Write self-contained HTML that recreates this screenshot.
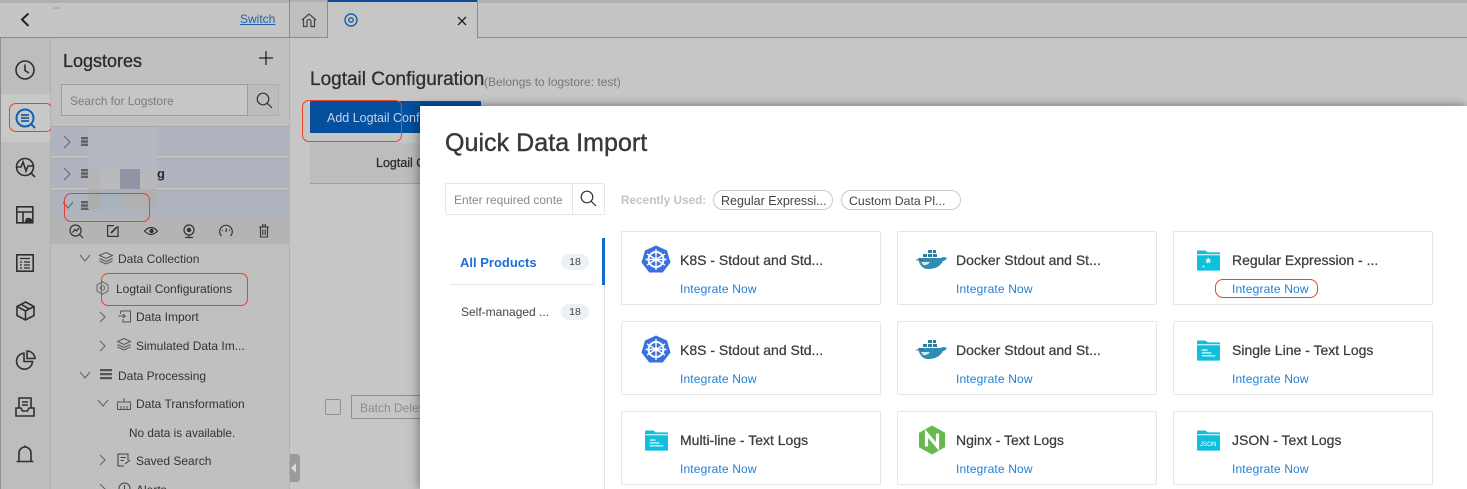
<!DOCTYPE html>
<html><head><meta charset="utf-8">
<style>
html,body{margin:0;padding:0;width:1467px;height:489px;overflow:hidden;background:#c6c6c6;font-family:"Liberation Sans",sans-serif;color:#333}
body{position:relative}
.a{position:absolute}
.t{position:absolute;white-space:nowrap;line-height:16px}
svg{position:absolute;overflow:visible}
.s{fill:none;stroke:#2f2f2f;stroke-width:1.6}
.tree{font-size:12px;color:#333}
.red{position:absolute;border:1px solid #e8412c;border-radius:7px;box-sizing:border-box}
.card{position:absolute;width:260px;height:74px;background:#fff;border:1px solid #e6e6e6;border-radius:2px;box-sizing:border-box}
.ct{position:absolute;left:58px;top:20px;font-size:14px;line-height:17px;color:#3c3c3c;white-space:nowrap;-webkit-text-stroke:.25px #3c3c3c}
.cl{position:absolute;left:58px;top:49px;font-size:12px;line-height:16px;color:#1f7fd8;white-space:nowrap;letter-spacing:.15px}
.ic{left:19px;top:13px}
.pill{position:absolute;height:20px;border:1px solid #c9c9c9;border-radius:10px;box-sizing:border-box;font-size:12.5px;line-height:21px;padding-left:7px;color:#444;white-space:nowrap}
.badge{position:absolute;width:28px;height:16px;border-radius:8px;background:#edf1f5;font-size:10.5px;line-height:16px;text-align:center;color:#444}
</style></head><body>

<!-- top bar -->
<div class="a" style="left:0;top:0;width:1467px;height:37px;background:#c5c5c5;border-bottom:1px solid #8b8b8b"></div>
<div class="a" style="left:0;top:0;width:1467px;height:3px;background:#b0b0b0"></div>
<div class="a" style="left:53px;top:7px;width:7px;height:2px;background:#c9ac95"></div>
<svg style="left:19px;top:12px" width="12" height="16"><path d="M9.5 1.5 L3 7.5 L9.5 14" fill="none" stroke="#222" stroke-width="2"/></svg>
<div class="t" style="left:240px;top:11px;font-size:12px;color:#1c62a8;text-decoration:underline">Switch</div>
<div class="a" style="left:289px;top:0;width:1px;height:37px;background:#8b8b8b"></div>
<div class="a" style="left:290px;top:2px;width:37px;height:35px;background:#bfbfbf"></div>
<svg style="left:301px;top:13px" width="16" height="14"><path d="M1 7 L8 1 L15 7 M2.5 6 V13.5 H6 V8.5 A2 2 0 0 1 10 8.5 V13.5 H13.5 V6" fill="none" stroke="#444" stroke-width="1.2"/></svg>
<div class="a" style="left:327px;top:0;width:151px;height:38px;background:#c6c6c6;border-left:1px solid #8b8b8b;border-right:1px solid #8b8b8b;box-sizing:border-box"></div>
<div class="a" style="left:328px;top:0;width:149px;height:2px;background:#0a4c9a"></div>
<svg style="left:344px;top:13px" width="14" height="14"><circle cx="7" cy="7" r="6" fill="none" stroke="#1a5ea8" stroke-width="1.4"/><circle cx="7" cy="7" r="2.2" fill="none" stroke="#1a5ea8" stroke-width="1.4"/></svg>
<svg style="left:457px;top:16px" width="10" height="10"><path d="M1 1 L9 9 M9 1 L1 9" stroke="#222" stroke-width="1.3"/></svg>

<!-- left rail -->
<div class="a" style="left:0;top:38px;width:51px;height:451px;background:#bdbdbd;border-right:1px solid #b2b2b2;box-sizing:border-box"></div>
<div class="a" style="left:0;top:38px;width:1px;height:451px;background:#8f8f8f"></div>
<div class="a" style="left:1px;top:94px;width:49px;height:48px;background:#c8c8c8"></div>
<svg style="left:15px;top:60px" width="20" height="20"><circle cx="10" cy="10" r="9" class="s"/><path d="M10 4.5 V10.5 L14 13" class="s"/></svg>
<svg style="left:15px;top:108px" width="21" height="21"><circle cx="10" cy="10" r="8.5" fill="none" stroke="#1462ae" stroke-width="2"/><path d="M6 7 H14 M6 10 H14 M6 13 H14" stroke="#1462ae" stroke-width="1.8"/><path d="M16 16 L20 20" stroke="#1462ae" stroke-width="2"/></svg>
<svg style="left:15px;top:157px" width="21" height="21"><circle cx="10" cy="10" r="8.5" class="s"/><path d="M1 10 H6 L8 5 L11 14 L13 9 H19" class="s" stroke-width="1.3"/><path d="M15.5 15.5 L20 20" class="s" stroke-width="2"/></svg>
<svg style="left:16px;top:206px" width="18" height="18"><rect x=".8" y=".8" width="16" height="16" class="s"/><path d="M1 6 H17 M7 6 V17" class="s"/><path d="M9 15 Q10 11 13 12 Q16 12 17 15 V17 H9Z" fill="#2f2f2f"/></svg>
<svg style="left:16px;top:254px" width="18" height="18"><rect x=".8" y=".8" width="16.4" height="16.4" class="s"/><path d="M4 4.5 H14 M4 8 H6 M8 8 H14 M4 11 H6 M8 11 H14 M4 14 H6 M8 14 H14" stroke="#2f2f2f" stroke-width="1.2"/></svg>
<svg style="left:16px;top:301px" width="19" height="20"><path d="M9.5 1 L18 5.5 V14.5 L9.5 19 L1 14.5 V5.5Z M1 5.5 L9.5 10 L18 5.5 M9.5 10 V19 M5 3.3 L13.5 8" class="s"/></svg>
<svg style="left:16px;top:350px" width="20" height="20"><path d="M8 3.2 A8 8 0 1 0 16.5 11.5 H8Z" class="s"/><path d="M11 1 A8 8 0 0 1 19 8.5 H11Z" class="s"/></svg>
<svg style="left:15px;top:397px" width="20" height="20"><path d="M1 11 V19 H19 V11 H14 L12.5 14 H7.5 L6 11Z M4 11 V1 H16 V11" class="s"/><path d="M7 5 H13 M7 8 H13" class="s" stroke-width="1.2"/></svg>
<svg style="left:16px;top:445px" width="18" height="20"><path d="M3 16 V8 A6 6 0 0 1 15 8 V16 M0.5 16.5 H17.5" class="s"/><path d="M9 .5 V2" class="s"/></svg>
<div class="red" style="left:9px;top:103px;width:44px;height:29px"></div>

<!-- sidebar -->
<div class="a" style="left:51px;top:38px;width:239px;height:451px;background:#c0c0c0;border-right:1px solid #b3b3b3;box-sizing:border-box"></div>
<div class="t" style="left:63px;top:50px;font-size:18px;line-height:22px;color:#2b2b2b;-webkit-text-stroke:.3px #2b2b2b">Logstores</div>
<svg style="left:259px;top:51px" width="14" height="14"><path d="M7 0 V14 M0 7 H14" stroke="#222" stroke-width="1.3"/></svg>
<div class="a" style="left:61px;top:84px;width:187px;height:32px;border:1px solid #9f9f9f;background:#c6c6c6;box-sizing:border-box"></div>
<div class="a" style="left:248px;top:84px;width:31px;height:32px;background:#bcbcbc;border:1px solid #b0b0b0;border-left:0;box-sizing:border-box"></div>
<div class="t" style="left:70px;top:93px;font-size:11.8px;color:#7b7b7b">Search for Logstore</div>
<svg style="left:256px;top:92px" width="17" height="17"><circle cx="7" cy="7" r="5.8" fill="none" stroke="#333" stroke-width="1.2"/><path d="M11 11 L16 16" stroke="#333" stroke-width="1.2"/></svg>

<div class="a" style="left:51px;top:126px;width:239px;height:30px;background:#b0b4bf;border-top:1px solid #a8a8a8;box-sizing:border-box"></div>
<div class="a" style="left:51px;top:158px;width:239px;height:30px;background:#b0b4bf;border-top:1px solid #a8a8a8;box-sizing:border-box"></div>
<div class="a" style="left:51px;top:190px;width:239px;height:29px;background:#b0b4bf;border-top:1px solid #a8a8a8;box-sizing:border-box"></div>
<div class="a" style="left:51px;top:218px;width:239px;height:26px;background:#b4b4b4"></div>
<div class="t" style="left:157px;top:166px;font-size:13px;font-weight:bold;color:#2a2a2a">g</div>
<svg style="left:63px;top:135px" width="8" height="14"><path d="M1 1 L7 7 L1 13" fill="none" stroke="#6b6b6b" stroke-width="1.2"/></svg>
<svg style="left:63px;top:167px" width="8" height="14"><path d="M1 1 L7 7 L1 13" fill="none" stroke="#6b6b6b" stroke-width="1.2"/></svg>
<svg style="left:62px;top:201px" width="12" height="8"><path d="M1 1 L6 7 L11 1" fill="none" stroke="#6b6b6b" stroke-width="1.2"/></svg>
<svg style="left:81px;top:136px" width="8" height="11"><path d="M0 1 H8 V3.4 H0Z M0 4.3 H8 V6.7 H0Z M0 7.6 H8 V10 H0Z" fill="#606066"/></svg>
<svg style="left:81px;top:168px" width="8" height="11"><path d="M0 1 H8 V3.4 H0Z M0 4.3 H8 V6.7 H0Z M0 7.6 H8 V10 H0Z" fill="#606066"/></svg>
<svg style="left:81px;top:200px" width="8" height="11"><path d="M0 1 H8 V3.4 H0Z M0 4.3 H8 V6.7 H0Z M0 7.6 H8 V10 H0Z" fill="#606066"/></svg>

<!-- blurred patch -->
<div class="a" style="left:88px;top:127px;width:69px;height:42px;background:#b5b8c1"></div>
<div class="a" style="left:88px;top:169px;width:12px;height:20px;background:#b5b5b7"></div>
<div class="a" style="left:100px;top:169px;width:20px;height:20px;background:#bababc"></div>
<div class="a" style="left:120px;top:169px;width:20px;height:20px;background:#9293a6"></div>
<div class="a" style="left:140px;top:169px;width:17px;height:20px;background:#b8b8bb"></div>
<div class="a" style="left:88px;top:189px;width:12px;height:20px;background:#acaeaa"></div>
<div class="a" style="left:100px;top:189px;width:20px;height:20px;background:#a6b3bd"></div>
<div class="a" style="left:120px;top:189px;width:37px;height:20px;background:#b0b0b2"></div>
<div class="red" style="left:64px;top:193px;width:86px;height:29px"></div>

<!-- toolbar icons -->
<svg style="left:69px;top:224px" width="15" height="15"><circle cx="6.5" cy="6.5" r="5.5" fill="none" stroke="#333" stroke-width="1.2"/><path d="M3.5 8.5 L6 5.5 L7.5 7 L10 4 M10.5 10.5 L14 14" fill="none" stroke="#333" stroke-width="1.2"/></svg>
<svg style="left:107px;top:225px" width="12" height="12"><path d="M11 1 V11.4 H.6 V.6 H7" fill="none" stroke="#333" stroke-width="1.2"/><path d="M4 8 L10 2" stroke="#333" stroke-width="1.6"/></svg>
<svg style="left:144px;top:226px" width="14" height="10"><path d="M.5 5 Q7 -2 13.5 5 Q7 12 .5 5Z" fill="none" stroke="#333" stroke-width="1.2"/><circle cx="7.5" cy="5" r="2.2" fill="#333"/></svg>
<svg style="left:183px;top:224px" width="12" height="14"><circle cx="6" cy="6" r="5" fill="none" stroke="#333" stroke-width="1.2"/><circle cx="6" cy="6" r="2.2" fill="#333"/><path d="M2 13.5 H10 M6 11 V13" stroke="#333" stroke-width="1.2"/></svg>
<svg style="left:219px;top:225px" width="14" height="12"><path d="M2.5 11 A6.3 6.3 0 1 1 11.5 11" fill="none" stroke="#333" stroke-width="1.2"/><path d="M7 7 L7.5 3.5 M3 5 L3.8 5.6 M11 5 L10.2 5.6" stroke="#333" stroke-width="1.2"/></svg>
<svg style="left:259px;top:224px" width="10" height="14"><path d="M1.5 3.5 V13 H8.5 V3.5 M0 3 H10 M3.5 3 V1 H6.5 V3 M3.8 5.5 V11 M6.2 5.5 V11" fill="none" stroke="#333" stroke-width="1.1"/></svg>

<!-- tree -->
<svg style="left:79px;top:254px" width="12" height="8"><path d="M1 1 L6 7 L11 1" fill="none" stroke="#666" stroke-width="1.1"/></svg>
<svg style="left:99px;top:252px" width="14" height="13"><path d="M7 .5 L13.5 3.5 L7 6.5 L.5 3.5Z M.5 6.5 L7 9.5 L13.5 6.5 M.5 9 L7 12 L13.5 9" fill="none" stroke="#555" stroke-width="1"/></svg>
<div class="t tree" style="left:118px;top:251px">Data Collection</div>
<svg style="left:96px;top:281px" width="13" height="14"><path d="M6.5 .8 L12 3.8 V10.2 L6.5 13.2 L1 10.2 V3.8Z" fill="none" stroke="#666" stroke-width="1"/><circle cx="6.5" cy="7" r="2.2" fill="none" stroke="#666"/></svg>
<div class="t tree" style="left:116px;top:281px">Logtail Configurations</div>
<div class="red" style="left:101px;top:273px;width:147px;height:33px"></div>
<svg style="left:99px;top:311px" width="8" height="12"><path d="M1 1 L6 6 L1 11" fill="none" stroke="#666" stroke-width="1.1"/></svg>
<svg style="left:118px;top:310px" width="14" height="13"><path d="M2.5 1 H12.5 V12 H5 V9 M2.5 1 V4 M0 6 H7 L5 4 M7 6 L5 8" fill="none" stroke="#555" stroke-width="1"/></svg>
<div class="t tree" style="left:136px;top:309px">Data Import</div>
<svg style="left:99px;top:340px" width="8" height="12"><path d="M1 1 L6 6 L1 11" fill="none" stroke="#666" stroke-width="1.1"/></svg>
<svg style="left:117px;top:338px" width="14" height="13"><path d="M7 .5 L13.5 3.5 L7 6.5 L.5 3.5Z M.5 6.5 L7 9.5 L13.5 6.5 M.5 9 L7 12 L13.5 9" fill="none" stroke="#555" stroke-width="1"/></svg>
<div class="t tree" style="left:136px;top:338px">Simulated Data Im...</div>
<svg style="left:79px;top:371px" width="12" height="8"><path d="M1 1 L6 7 L11 1" fill="none" stroke="#666" stroke-width="1.1"/></svg>
<svg style="left:100px;top:369px" width="12" height="12"><path d="M0 0 H12 V2.2 H0Z M0 4 H12 V6.2 H0Z M0 8 H12 V10.2 H0Z" fill="#555"/></svg>
<div class="t tree" style="left:118px;top:368px">Data Processing</div>
<svg style="left:97px;top:399px" width="12" height="8"><path d="M1 1 L6 7 L11 1" fill="none" stroke="#666" stroke-width="1.1"/></svg>
<svg style="left:117px;top:397px" width="14" height="13"><path d="M.5 5 H13.5 V12.5 H.5Z M7 1 V5 M4 12 V9 M7 12 V9 M10 12 V9" fill="none" stroke="#555" stroke-width="1"/></svg>
<div class="t tree" style="left:136px;top:396px">Data Transformation</div>
<div class="t tree" style="left:129px;top:425px;font-size:11.8px">No data is available.</div>
<svg style="left:99px;top:454px" width="8" height="12"><path d="M1 1 L6 6 L1 11" fill="none" stroke="#666" stroke-width="1.1"/></svg>
<svg style="left:117px;top:453px" width="14" height="14"><path d="M11 7 V1 H1 V13 H7 M3.5 4.5 H8.5 M3.5 7.5 H7 M8 11 L13 7" fill="none" stroke="#444" stroke-width="1.1"/></svg>
<div class="t tree" style="left:136px;top:453px">Saved Search</div>
<svg style="left:99px;top:483px" width="8" height="12"><path d="M1 1 L6 6 L1 11" fill="none" stroke="#666" stroke-width="1.1"/></svg>
<svg style="left:118px;top:482px" width="13" height="13"><circle cx="6.5" cy="6.5" r="5.5" fill="none" stroke="#444"/><path d="M6.5 3 V8" stroke="#444"/></svg>
<div class="t tree" style="left:136px;top:482px">Alerts</div>
<div class="a" style="left:290px;top:454px;width:10px;height:28px;background:#9a9a9a;border-radius:0 3px 3px 0"></div>
<svg style="left:291px;top:463px" width="6" height="10"><path d="M5 0 V10 L0 5Z" fill="#d8d8d8"/></svg>

<!-- main -->
<div class="t" style="left:310px;top:70px;font-size:19px;line-height:20px;color:#2e2e2e;-webkit-text-stroke:.3px #2e2e2e">Logtail Configuration</div>
<div class="t" style="left:484px;top:74px;font-size:12px;color:#777">(Belongs to logstore: test)</div>
<div class="a" style="left:310px;top:101px;width:171px;height:32px;background:#04509f;border-radius:1px"></div>
<div class="t" style="left:327px;top:110px;font-size:12.5px;color:#c6d3e4">Add Logtail Config</div>
<div class="red" style="left:302px;top:100px;width:100px;height:42px"></div>
<div class="a" style="left:310px;top:143px;width:120px;height:41px;background:#bdbdbd;border-bottom:1px solid #a0a0a0;box-sizing:border-box"></div>
<div class="t" style="left:376px;top:155px;font-size:12.5px;color:#2e2e2e;-webkit-text-stroke:.3px #2e2e2e">Logtail Config</div>
<div class="a" style="left:325px;top:399px;width:16px;height:16px;border:1px solid #8f8f8f;border-radius:2px;box-sizing:border-box"></div>
<div class="a" style="left:351px;top:395px;width:80px;height:24px;border:1px solid #8f8f8f;box-sizing:border-box"></div>
<div class="t" style="left:360px;top:400px;font-size:12px;color:#8c8c8c">Batch Delete</div>

<!-- modal -->
<div class="a" style="left:420px;top:106px;width:1047px;height:383px;background:#fff;box-shadow:-4px 0 10px rgba(0,0,0,.22),0 -2px 6px rgba(0,0,0,.18)"></div>
<div class="t" style="left:445px;top:128px;font-size:25px;line-height:30px;color:#383838;letter-spacing:.05px;-webkit-text-stroke:.4px #383838">Quick Data Import</div>
<div class="a" style="left:445px;top:183px;width:160px;height:32px;border:1px solid #e6e6e6;border-radius:2px;box-sizing:border-box"></div>
<div class="a" style="left:572px;top:183px;width:1px;height:32px;background:#e6e6e6"></div>
<div class="t" style="left:454px;top:192px;width:109px;overflow:hidden;font-size:12px;color:#8a8a8a">Enter required content</div>
<svg style="left:580px;top:190px" width="17" height="17"><circle cx="7" cy="7" r="5.8" fill="none" stroke="#333" stroke-width="1.2"/><path d="M11 11 L16 16" stroke="#333" stroke-width="1.2"/></svg>
<div class="t" style="left:621px;top:192px;font-size:11.8px;font-weight:bold;color:#c4c4c4">Recently Used:</div>
<div class="pill" style="left:713px;top:190px;width:120px">Regular Expressi...</div>
<div class="pill" style="left:841px;top:190px;width:120px;font-size:12.3px">Custom Data Pl...</div>

<div class="a" style="left:604px;top:238px;width:1px;height:251px;background:#e4e4e4"></div>
<div class="a" style="left:602px;top:238px;width:3px;height:47px;background:#1469d0"></div>
<div class="t" style="left:460px;top:255px;font-size:13px;font-weight:bold;color:#1a6fd4">All Products</div>
<div class="badge" style="left:561px;top:254px">18</div>
<div class="a" style="left:450px;top:284px;width:144px;height:1px;background:#e4e4e4"></div>
<div class="t" style="left:461px;top:304px;font-size:12px;color:#444">Self-managed ...</div>
<div class="badge" style="left:561px;top:304px">18</div>

<!-- cards -->
<div class="card" style="left:621px;top:231px"><svg class="ic" width="30" height="30" viewBox="0 0 30 30"><path d="M15 .5 L26 5.5 L29.5 17.5 L21.7 27.5 H8.3 L.5 17.5 L4 5.5Z" fill="#3a6fe0"/><circle cx="15" cy="14.5" r="7.5" fill="none" stroke="#fff" stroke-width="2"/><path d="M15 4 V25 M6 9 L24 20 M24 9 L6 20 M4.5 14.5 H25.5" stroke="#fff" stroke-width="1.4"/><circle cx="15" cy="14.5" r="2" fill="#fff"/></svg><div class="ct">K8S - Stdout and Std...</div><div class="cl">Integrate Now</div></div>
<div class="card" style="left:897px;top:231px"><svg style="left:18px;top:17px" width="32" height="20" viewBox="0 0 32 20"><path d="M2 9 H25 Q27 7 31 9 Q29 12 27 12 Q23 20 12 20 Q4 20 2 9Z" fill="#2e8db4"/><path d="M7 5 H11 V8 H7Z M12 5 H16 V8 H12Z M17 5 H21 V8 H17Z M12 1 H16 V4 H12Z M17 1 H20 V4 H17Z" fill="#2f7c9c"/><path d="M0 11 H7" stroke="#555" stroke-width=".8"/><path d="M5 13 H14 Q11 17 7 16Z" fill="#d2e6ee"/></svg><div class="ct">Docker Stdout and St...</div><div class="cl">Integrate Now</div></div>
<div class="card" style="left:1173px;top:231px"><svg style="left:23px;top:18px" width="23" height="21" viewBox="0 0 24 21"><path d="M0 1 Q0 0 1 0 H9 L11 2 H23 Q24 2 24 3 V4 H0Z M0 5 H24 V20 Q24 21 23 21 H1 Q0 21 0 20Z" fill="#0fc0dc"/><text x="9" y="18" font-size="14" font-family="Liberation Sans" fill="#fff" font-weight="bold">*</text><rect x="6" y="16" width="1.6" height="1.6" fill="#fff"/></svg><div class="ct">Regular Expression - ...</div><div class="cl">Integrate Now</div></div>

<div class="card" style="left:621px;top:321px"><svg class="ic" width="30" height="30" viewBox="0 0 30 30"><path d="M15 .5 L26 5.5 L29.5 17.5 L21.7 27.5 H8.3 L.5 17.5 L4 5.5Z" fill="#3a6fe0"/><circle cx="15" cy="14.5" r="7.5" fill="none" stroke="#fff" stroke-width="2"/><path d="M15 4 V25 M6 9 L24 20 M24 9 L6 20 M4.5 14.5 H25.5" stroke="#fff" stroke-width="1.4"/><circle cx="15" cy="14.5" r="2" fill="#fff"/></svg><div class="ct">K8S - Stdout and Std...</div><div class="cl">Integrate Now</div></div>
<div class="card" style="left:897px;top:321px"><svg style="left:18px;top:17px" width="32" height="20" viewBox="0 0 32 20"><path d="M2 9 H25 Q27 7 31 9 Q29 12 27 12 Q23 20 12 20 Q4 20 2 9Z" fill="#2e8db4"/><path d="M7 5 H11 V8 H7Z M12 5 H16 V8 H12Z M17 5 H21 V8 H17Z M12 1 H16 V4 H12Z M17 1 H20 V4 H17Z" fill="#2f7c9c"/><path d="M0 11 H7" stroke="#555" stroke-width=".8"/><path d="M5 13 H14 Q11 17 7 16Z" fill="#d2e6ee"/></svg><div class="ct">Docker Stdout and St...</div><div class="cl">Integrate Now</div></div>
<div class="card" style="left:1173px;top:321px"><svg style="left:23px;top:18px" width="23" height="21" viewBox="0 0 24 21"><path d="M0 1 Q0 0 1 0 H9 L11 2 H23 Q24 2 24 3 V4 H0Z M0 5 H24 V20 Q24 21 23 21 H1 Q0 21 0 20Z" fill="#0fc0dc"/><path d="M5 10 H11 M5 13 H15 M5 16 H19" stroke="#fff" stroke-width="1.2"/></svg><div class="ct">Single Line - Text Logs</div><div class="cl">Integrate Now</div></div>

<div class="card" style="left:621px;top:411px"><svg style="left:23px;top:18px" width="23" height="21" viewBox="0 0 24 21"><path d="M0 1 Q0 0 1 0 H9 L11 2 H23 Q24 2 24 3 V4 H0Z M0 5 H24 V20 Q24 21 23 21 H1 Q0 21 0 20Z" fill="#0fc0dc"/><path d="M5 10 H11 M5 13 H15 M5 16 H19" stroke="#fff" stroke-width="1.2"/></svg><div class="ct">Multi-line - Text Logs</div><div class="cl">Integrate Now</div></div>
<div class="card" style="left:897px;top:411px"><svg style="left:20px;top:13px" width="28" height="30" viewBox="0 0 28 30"><path d="M14 .5 L27 7.8 V22.2 L14 29.5 L1 22.2 V7.8Z" fill="#66b84f"/><path d="M8.5 21.5 V8.5 L19.5 21.5 V8.5" fill="none" stroke="#fff" stroke-width="3.2"/></svg><div class="ct">Nginx - Text Logs</div><div class="cl">Integrate Now</div></div>
<div class="card" style="left:1173px;top:411px"><svg style="left:23px;top:18px" width="23" height="21" viewBox="0 0 24 21"><path d="M0 1 Q0 0 1 0 H9 L11 2 H23 Q24 2 24 3 V4 H0Z M0 5 H24 V20 Q24 21 23 21 H1 Q0 21 0 20Z" fill="#0fc0dc"/><text x="3" y="16" font-size="6.5" font-family="Liberation Sans" fill="#fff">JSON</text></svg><div class="ct">JSON - Text Logs</div><div class="cl">Integrate Now</div></div>

<div class="red" style="left:1215px;top:279px;width:103px;height:19px;border-radius:8px"></div>
</body></html>
